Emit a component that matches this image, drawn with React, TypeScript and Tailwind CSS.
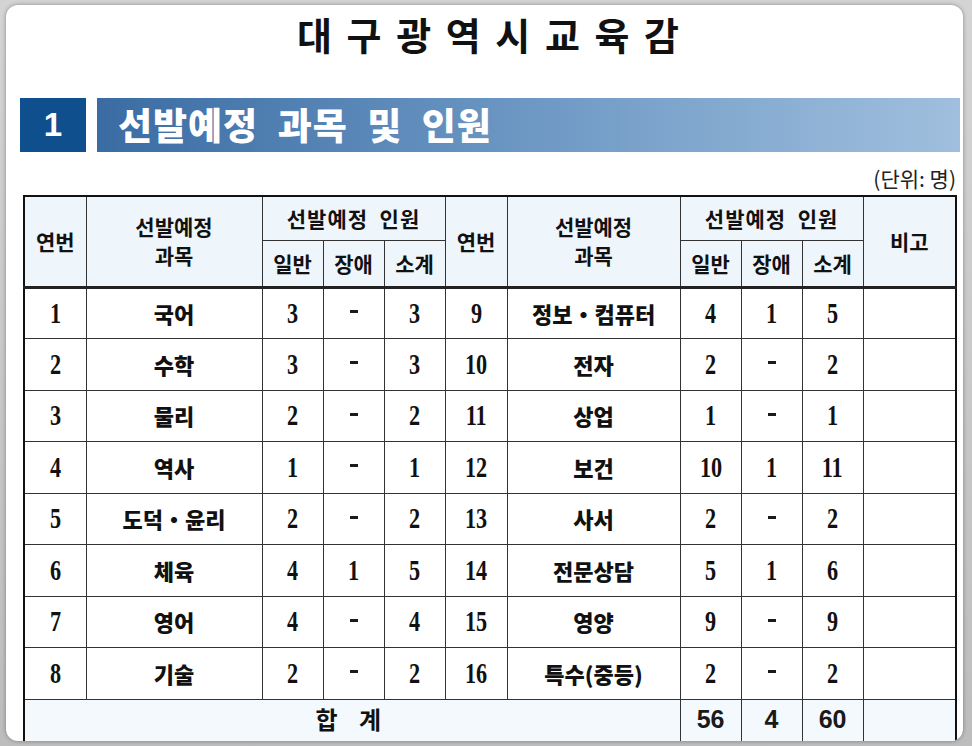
import React from "react";

type Row = [string, string, string, string, string];

const left: Row[] = [
  ["1", "국어", "3", "-", "3"],
  ["2", "수학", "3", "-", "3"],
  ["3", "물리", "2", "-", "2"],
  ["4", "역사", "1", "-", "1"],
  ["5", "도덕・윤리", "2", "-", "2"],
  ["6", "체육", "4", "1", "5"],
  ["7", "영어", "4", "-", "4"],
  ["8", "기술", "2", "-", "2"],
];

const right: Row[] = [
  ["9", "정보・컴퓨터", "4", "1", "5"],
  ["10", "전자", "2", "-", "2"],
  ["11", "상업", "1", "-", "1"],
  ["12", "보건", "10", "1", "11"],
  ["13", "사서", "2", "-", "2"],
  ["14", "전문상담", "5", "1", "6"],
  ["15", "영양", "9", "-", "9"],
  ["16", "특수(중등)", "2", "-", "2"],
];

const kr = "font-['Noto_Sans_CJK_KR',sans-serif]";

function Num({ v }: { v: string }) {
  if (v === "-") {
    return <span className="inline-block h-[3px] w-[8px] translate-y-[-3px] bg-[#1a1a1a] align-middle" />;
  }
  return (
    <span className="inline-block scale-x-[0.74] font-['Liberation_Serif',serif] text-[30px] font-bold leading-none text-[#111]">
      {v}
    </span>
  );
}

function Cells({ r }: { r: Row }) {
  return (
    <>
      <td className="border border-[#333] text-center">
        <Num v={r[0]} />
      </td>
      <td className={`border border-[#333] text-center ${kr} text-[22px] font-black text-[#111]`}>{r[1]}</td>
      <td className="border border-[#333] text-center">
        <Num v={r[2]} />
      </td>
      <td className="border border-[#333] text-center">
        <Num v={r[3]} />
      </td>
      <td className="border border-[#333] text-center">
        <Num v={r[4]} />
      </td>
    </>
  );
}

const th = `border border-[#333] bg-[#eef5fb] text-center ${kr} text-[21px] font-bold text-[#111] leading-[29px]`;

export default function App() {
  return (
    <div className="flex h-[746px] w-[972px] bg-gradient-to-b from-[#d4d4d4] to-[#bdbdbd] pb-[5px] pl-[6px] pr-[9px] pt-[5px]">
      <div className="flex flex-1 flex-col overflow-hidden rounded-[12px] bg-white shadow-[0_0_4px_rgba(0,0,0,0.35)]">
        <div className={`flex h-[56px] shrink-0 items-center justify-center pl-[10px] ${kr} text-[38px] font-bold tracking-[3px] text-[#111]`}>
          대 구 광 역 시 교 육 감
        </div>

        <div className="mt-[37px] flex h-[54px] shrink-0 gap-[11px] pl-[14px] pr-[3px]">
          <div className="flex w-[66px] items-center justify-center bg-[#104f8e] font-['Liberation_Sans',sans-serif] text-[33px] font-bold text-white">
            1
          </div>
          <div className={`flex flex-1 items-center bg-gradient-to-r from-[#3a6ca3] via-[#6d98c4] to-[#a0bfde] pl-[21px] ${kr} text-[37px] font-black tracking-[1px] text-white [word-spacing:10px]`}>
            선발예정 과목 및 인원
          </div>
        </div>

        <div className={`mt-[13px] flex h-[27px] shrink-0 items-center justify-end pr-[7px] ${kr} text-[21px] text-[#222]`}>
          (단위: 명)
        </div>

        <div className="mt-[3px] shrink-0 pl-[17px]">
          <table className="w-[932px] table-fixed border-collapse border-2 border-[#111]">
            <colgroup>
              <col className="w-[62px]" />
              <col className="w-[176px]" />
              <col className="w-[61px]" />
              <col className="w-[61px]" />
              <col className="w-[61px]" />
              <col className="w-[62px]" />
              <col className="w-[173px]" />
              <col className="w-[61px]" />
              <col className="w-[61px]" />
              <col className="w-[61px]" />
              <col className="w-[93px]" />
            </colgroup>
            <thead>
              <tr className="h-[44px]">
                <th rowSpan={2} className={`${th} border-b-[3px] border-b-[#222]`}>연번</th>
                <th rowSpan={2} className={`${th} border-b-[3px] border-b-[#222]`}>
                  선발예정
                  <br />
                  과목
                </th>
                <th colSpan={3} className={`${th} tracking-[1px]`}>선발예정&nbsp; 인원</th>
                <th rowSpan={2} className={`${th} border-b-[3px] border-b-[#222]`}>연번</th>
                <th rowSpan={2} className={`${th} border-b-[3px] border-b-[#222]`}>
                  선발예정
                  <br />
                  과목
                </th>
                <th colSpan={3} className={`${th} tracking-[1px]`}>선발예정&nbsp; 인원</th>
                <th rowSpan={2} className={`${th} border-b-[3px] border-b-[#222]`}>비고</th>
              </tr>
              <tr className="h-[47px]">
                {["일반", "장애", "소계", "일반", "장애", "소계"].map((t, i) => (
                  <th key={i} className={`${th} border-b-[3px] border-b-[#222]`}>
                    {t}
                  </th>
                ))}
              </tr>
            </thead>
            <tbody>
              {left.map((r, i) => (
                <tr key={i} className="h-[51.5px]">
                  <Cells r={r} />
                  <Cells r={right[i]} />
                  <td className="border border-[#333]" />
                </tr>
              ))}
              <tr className="h-[52px] bg-[#f3f9fc]">
                <td colSpan={7} className={`border border-[#333] pt-[2px] text-center align-top ${kr} text-[24px] font-bold leading-[34px] tracking-[8px] text-[#111]`}>
                  합 계
                </td>
                {["56", "4", "60"].map((v) => (
                  <td key={v} className="border border-[#333] pt-[2px] text-center align-top font-['Liberation_Sans',sans-serif] text-[25px] font-bold leading-[34px] text-[#1a1a1a]">
                    {v}
                  </td>
                ))}
                <td className="border border-[#333]" />
              </tr>
            </tbody>
          </table>
        </div>
      </div>
    </div>
  );
}
